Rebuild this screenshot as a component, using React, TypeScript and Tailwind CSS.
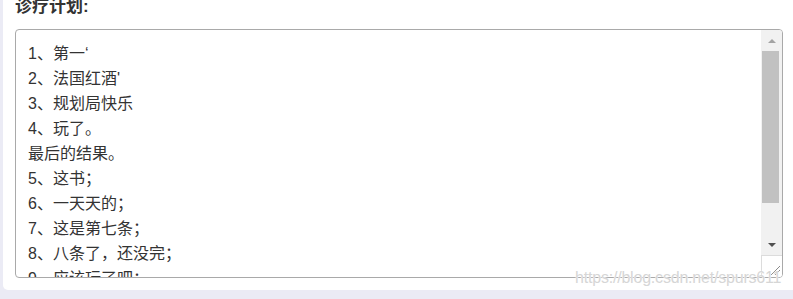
const lines = [
  "1、第一‘",
  "2、法国红酒'",
  "3、规划局快乐",
  "4、玩了。",
  "最后的结果。",
  "5、这书；",
  "6、一天天的；",
  "7、这是第七条；",
  "8、八条了，还没完；",
  "9、应该玩了吧；",
  "10、结束。",
];

const font = { fontFamily: '"Liberation Sans", "Noto Sans CJK SC", sans-serif' };

const Scrollbar = () => (
  <div className="flex w-[21px] shrink-0 flex-col bg-[#f1f1f1]">
    {/* up button */}
    <div className="flex h-[21px] items-center justify-center">
      <div className="h-0 w-0 border-x-[4px] border-b-[4px] border-x-transparent border-b-[#a3a3a3]" />
    </div>
    {/* thumb */}
    <div className="ml-[1px] h-[152px] w-[17px] bg-[#c1c1c1]" />
    <div className="h-[32px]" />
    {/* down button */}
    <div className="flex h-[20px] items-center justify-center">
      <div className="h-0 w-0 border-x-[4px] border-t-[4px] border-x-transparent border-t-[#505050]" />
    </div>
    {/* resize corner */}
    <div className="relative h-[22px] border-l border-t border-[#dcdcdc] bg-white">
      <svg className="absolute bottom-[1px] right-[1px]" width="12" height="12" viewBox="0 0 12 12">
        <line x1="2" y1="11" x2="11" y2="2" stroke="#8a8a8a" strokeWidth="1" />
        <line x1="6" y1="11" x2="11" y2="6" stroke="#8a8a8a" strokeWidth="1" />
      </svg>
    </div>
  </div>
);

export default function App() {
  return (
    <div className="h-[299px] w-[793px] overflow-hidden bg-[#ebebf5] pl-[3px]" style={font}>
      <div className="relative h-[292px] rounded-bl-[5px] bg-white pl-[12px]">
        <div className="-mt-[2px] text-[17px] font-bold leading-[17px] text-[#333]">诊疗计划:</div>

        <div className="mt-[14px] flex h-[249px] w-[768px] overflow-hidden rounded-[4px] border border-[#a9a9a9]">
          <div className="flex-1 overflow-hidden pl-[12px] pt-[11px] text-[16px] leading-[25px] text-[#333]">
            {lines.map((l) => (
              <div key={l} className="whitespace-pre">{l}</div>
            ))}
          </div>
          <Scrollbar />
        </div>

        {/* watermark */}
        <div
          className="absolute left-[572px] top-[271px] text-[16px] leading-[18px] tracking-[-0.2px] text-[#d6d6d6]"
          style={{ textShadow: "0 0 1px #fff, 0 0 1px #fff" }}
        >
          https://blog.csdn.net/spurs611
        </div>
      </div>
    </div>
  );
}
